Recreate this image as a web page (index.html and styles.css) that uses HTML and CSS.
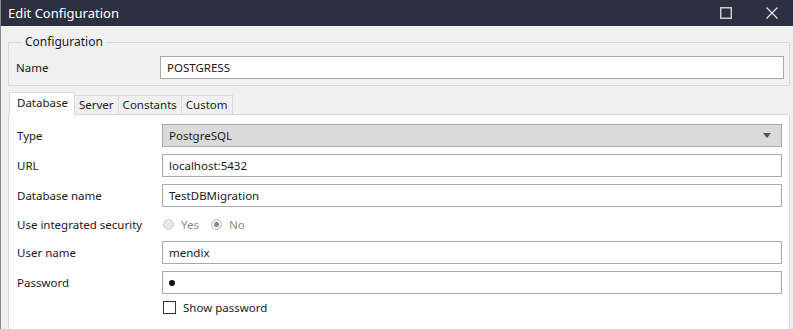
FILE: index.html
```html
<!DOCTYPE html>
<html>
<head>
<meta charset="utf-8">
<link rel="stylesheet" href="styles.css">
</head>
<body>
<div class="window">
  <div class="titlebar">
    <span class="title">Edit Configuration</span>
    <span class="tb-btn max"><svg width="12" height="12" viewBox="0 0 12 12"><rect x="0.75" y="0.75" width="10.5" height="10.5" fill="none" stroke="#c8ccd6" stroke-width="1.5"/></svg></span>
    <span class="tb-btn close"><svg width="12" height="12" viewBox="0 0 12 12"><path d="M0.5 0.5 L11.5 11.5 M11.5 0.5 L0.5 11.5" stroke="#e6e8ee" stroke-width="1.2" fill="none"/></svg></span>
  </div>
  <div class="content">
    <fieldset class="group">
      <legend>Configuration</legend>
      <div class="row name-row">
        <label class="lbl">Name</label>
        <div class="input">POSTGRESS</div>
      </div>
    </fieldset>
    <div class="tabs">
      <div class="tab active">Database</div>
      <div class="tab">Server</div>
      <div class="tab">Constants</div>
      <div class="tab">Custom</div>
    </div>
    <div class="panel">
      <div class="row">
        <label class="lbl">Type</label>
        <div class="input select"><span>PostgreSQL</span><svg class="arrow" width="8" height="5" viewBox="0 0 8 5"><path d="M0 0 H8 L4 5 Z" fill="#555"/></svg></div>
      </div>
      <div class="row">
        <label class="lbl">URL</label>
        <div class="input">localhost:5432</div>
      </div>
      <div class="row">
        <label class="lbl">Database name</label>
        <div class="input">TestDBMigration</div>
      </div>
      <div class="row radio-row">
        <label class="lbl">Use integrated security</label>
        <div class="radios">
          <span class="radio"></span><span class="rtext">Yes</span>
          <span class="radio checked"></span><span class="rtext">No</span>
        </div>
      </div>
      <div class="row">
        <label class="lbl">User name</label>
        <div class="input">mendix</div>
      </div>
      <div class="row">
        <label class="lbl">Password</label>
        <div class="input"><span class="dot"></span></div>
      </div>
      <div class="row check-row">
        <span class="lbl"></span>
        <span class="checkbox"></span><span class="ctext">Show password</span>
      </div>
    </div>
  </div>
</div>
</body>
</html>
```
FILE: styles.css
```css
* { box-sizing: border-box; }
html, body { margin: 0; padding: 0; }
body {
  font-family: "Noto Sans", "Open Sans", sans-serif;
  font-size: 11.5px;
  color: #1a1a1a;
  background: #f0f0f0;
}
.window {
  width: 793px;
  height: 329px;
  overflow: hidden;
  background: #f0f0f0;
  border-left: 1px solid #8a8a8a;
}
.titlebar {
  height: 26px;
  background: #2c3142;
  display: flex;
  align-items: center;
  color: #ffffff;
  margin-left: -1px;
}
.title {
  font-size: 13px;
  padding-left: 8px;
  flex: 1;
}
.tb-btn { display: flex; align-items: center; }
.tb-btn.max { margin-right: 34px; }
.tb-btn.close { margin-right: 15px; }
.content {
  padding: 0 3px 0 7px;
}
.group {
  margin: 8px 0 0 0;
  border: 1px solid #d8d8d8;
  padding: 6px 5px 6px 7px;
}
.group legend {
  padding: 0 3px;
  margin-left: 6px;
  font-size: 12px;
  line-height: 16px;
  color: #1a1a1a;
}
.row {
  display: flex;
  align-items: center;
  height: 23px;
  margin-bottom: 7px;
}
.group .row { margin-bottom: 0; }
.lbl {
  width: 145px;
  flex: none;
}
.name-row .lbl { width: 144px; }
.input {
  flex: 1;
  height: 23px;
  border: 1px solid #a9a9a9;
  background: #ffffff;
  display: flex;
  align-items: center;
  padding-left: 6px;
}
.select {
  background: #dadada;
  justify-content: space-between;
  padding-right: 10px;
}
.tabs {
  display: flex;
  align-items: flex-end;
  margin-top: 6px;
  height: 22px;
  padding-left: 1px;
}
.tab {
  height: 19px;
  border: 1px solid #d9d9d9;
  border-bottom: none;
  border-left: none;
  background: #f0f0f0;
  padding: 0 4px;
  line-height: 18px;
}
.tab.active {
  height: 23px;
  border-left: 1px solid #d9d9d9;
  background: #ffffff;
  padding: 0 6px 0 7px;
  line-height: 20px;
  margin-bottom: -1px;
  position: relative;
  z-index: 1;
}
.panel {
  background: #ffffff;
  border: 1px solid #d9d9d9;
  height: 230px;
  padding: 9px 7px 0 8px;
}
.radio-row { height: 20px; }
.radios {
  display: flex;
  align-items: center;
  padding-left: 1px;
}
.radio {
  width: 11px;
  height: 11px;
  border-radius: 50%;
  border: 1px solid #cfcfcf;
  background: #e8e8e8;
  display: inline-block;
  position: relative;
}
.radio.checked { background: #f2f2f2; border-color: #bdbdbd; }
.radio.checked::after {
  content: "";
  position: absolute;
  left: 2px; top: 2px;
  width: 5px; height: 5px;
  border-radius: 50%;
  background: #8a8a8a;
}
.rtext { color: #8a8a8a; margin-left: 7px; margin-right: 12px; }
.dot {
  width: 6px; height: 6px; border-radius: 50%; background: #111; display: inline-block;
}
.check-row { height: 14px; margin-top: -1px; }
.checkbox {
  width: 13px; height: 13px;
  border: 1px solid #333;
  background: #fff;
  display: inline-block;
  margin-left: 1px;
}
.ctext { margin-left: 7px; }
```
